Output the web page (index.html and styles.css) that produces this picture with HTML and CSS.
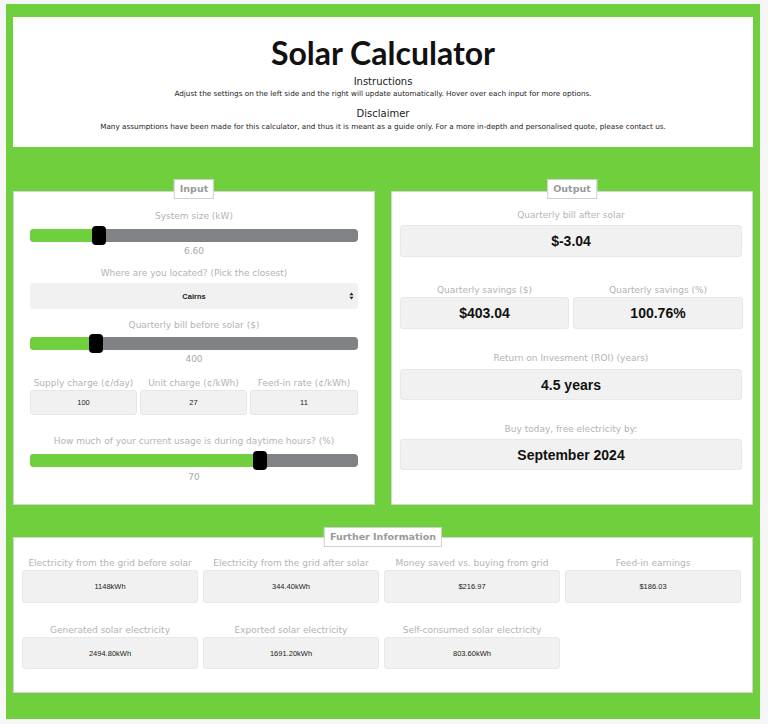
FILE: index.html
```html
<!DOCTYPE html>
<html>
<head>
<meta charset="utf-8">
<title>Solar Calculator</title>
<link rel="stylesheet" href="styles.css">
</head>
<body>
<div class="frame">
  <header class="intro">
    <h1 class="title">Solar Calculator</h1>
    <h2 class="sub first">Instructions</h2>
    <p class="note n1">Adjust the settings on the left side and the right will update automatically. Hover over each input for more options.</p>
    <h2 class="sub second">Disclaimer</h2>
    <p class="note n2">Many assumptions have been made for this calculator, and thus it is meant as a guide only. For a more in-depth and personalised quote, please contact us.</p>
  </header>

  <div class="panels">
    <section class="panel input-panel">
      <span class="legend">Input</span>
      <div class="lbl l1">System size (kW)</div>
      <div class="track t1"><div class="fill" style="width:21%"></div><div class="thumb" style="left:calc(21% - 7px)"></div></div>
      <div class="val v1">6.60</div>

      <div class="lbl l2">Where are you located? (Pick the closest)</div>
      <div class="select">
        <span>Cairns</span>
        <svg class="arrows" width="5" height="8" viewBox="0 0 5 8"><path d="M2.5 0.5 L4.6 3.2 H0.4 Z M2.5 7.5 L4.6 4.8 H0.4 Z" fill="#222"/></svg>
      </div>

      <div class="lbl l3">Quarterly bill before solar ($)</div>
      <div class="track t2"><div class="fill" style="width:20%"></div><div class="thumb" style="left:calc(20% - 7px)"></div></div>
      <div class="val v2">400</div>

      <div class="rates">
        <div class="rate"><div class="lbl">Supply charge (¢/day)</div><div class="field">100</div></div>
        <div class="rate"><div class="lbl">Unit charge (¢/kWh)</div><div class="field">27</div></div>
        <div class="rate"><div class="lbl">Feed-in rate (¢/kWh)</div><div class="field">11</div></div>
      </div>

      <div class="lbl l4">How much of your current usage is during daytime hours? (%)</div>
      <div class="track t3"><div class="fill" style="width:70%"></div><div class="thumb" style="left:calc(70% - 7px)"></div></div>
      <div class="val v3">70</div>
    </section>

    <section class="panel output-panel">
      <span class="legend">Output</span>
      <div class="lbl o1">Quarterly bill after solar</div>
      <div class="out b1">$-3.04</div>
      <div class="pair">
        <div class="half"><div class="lbl">Quarterly savings ($)</div><div class="out">$403.04</div></div>
        <div class="half"><div class="lbl">Quarterly savings (%)</div><div class="out">100.76%</div></div>
      </div>
      <div class="lbl o3">Return on Invesment (ROI) (years)</div>
      <div class="out b3">4.5 years</div>
      <div class="lbl o4">Buy today, free electricity by:</div>
      <div class="out b4">September 2024</div>
    </section>
  </div>

  <section class="panel further">
    <span class="legend wide">Further Information</span>
    <div class="grid">
      <div class="cell"><div class="lbl">Electricity from the grid before solar</div><div class="info">1148kWh</div></div>
      <div class="cell"><div class="lbl">Electricity from the grid after solar</div><div class="info">344.40kWh</div></div>
      <div class="cell"><div class="lbl">Money saved vs. buying from grid</div><div class="info">$216.97</div></div>
      <div class="cell"><div class="lbl">Feed-in earnings</div><div class="info">$186.03</div></div>
      <div class="cell row2"><div class="lbl">Generated solar electricity</div><div class="info">2494.80kWh</div></div>
      <div class="cell row2"><div class="lbl">Exported solar electricity</div><div class="info">1691.20kWh</div></div>
      <div class="cell row2"><div class="lbl">Self-consumed solar electricity</div><div class="info">803.60kWh</div></div>
    </div>
  </section>
</div>
</body>
</html>
```

FILE: styles.css
```css
* { box-sizing: border-box; }
html, body { margin: 0; padding: 0; }
body {
  background: #f6f6f6;
  font-family: "DejaVu Sans", Verdana, sans-serif;
  width: 768px;
  height: 724px;
  overflow: hidden;
}
.frame {
  margin: 4px 0 0 6px;
  width: 754px;
  height: 715px;
  background: #6fcf3c;
  padding: 13px 7px 0;
}
.intro {
  background: #fff;
  height: 130px;
  text-align: center;
  padding-top: 19px;
  color: #222;
}
.title {
  margin: 0;
  font-family: "Lato", "Liberation Sans", sans-serif;
  font-weight: 700;
  font-size: 32px;
  line-height: 34px;
  color: #111;
}
.sub {
  margin: 0;
  font-weight: normal;
  font-size: 10px;
  line-height: 12px;
  color: #222;
}
.sub.first { margin-top: 6px; }
.sub.second { margin-top: 9px; }
.note {
  margin: 1px 0 0;
  font-size: 7.25px;
  line-height: 10px;
  color: #222;
}
.note.n2 { margin-top: 2px; }
.panels {
  margin-top: 44px;
  display: grid;
  grid-template-columns: 362px 362px;
  column-gap: 16px;
}
.panel {
  position: relative;
  background: #fff;
  border: 1px solid #d4d4d4;
}
.legend {
  position: absolute;
  top: -13px;
  left: 50%;
  transform: translateX(-50%);
  height: 20px;
  padding: 0 5px;
  background: #fff;
  border: 1px solid #cfcfcf;
  font-weight: bold;
  font-size: 9.5px;
  line-height: 18px;
  color: #9a9a9a;
  white-space: nowrap;
}
.legend.wide { top: -11px; }
.lbl {
  text-align: center;
  font-size: 9px;
  line-height: 14px;
  color: #b3b3b3;
  white-space: nowrap;
}
.input-panel {
  height: 314px;
  padding: 17px 16px 0;
}
.track {
  position: relative;
  height: 13px;
  border-radius: 4px;
  background: #808285;
}
.fill {
  height: 100%;
  background: #6fcf3c;
  border-radius: 4px 0 0 4px;
}
.thumb {
  position: absolute;
  top: -3px;
  width: 14px;
  height: 19px;
  border-radius: 4px;
  background: #000;
}
.t1 { margin-top: 6px; }
.val {
  text-align: center;
  font-size: 9px;
  line-height: 14px;
  color: #a8a8a8;
}
.v1 { margin-top: 2px; }
.l2 { margin-top: 8px; }
.select {
  position: relative;
  margin-top: 3px;
  height: 26px;
  background: #f1f1f1;
  border-radius: 3px;
  display: flex;
  align-items: center;
  justify-content: center;
  font-family: "Liberation Sans", Arial, sans-serif;
  font-weight: bold;
  font-size: 7.5px;
  color: #222;
}
.arrows {
  position: absolute;
  right: 4px;
  top: 9px;
}
.l3 { margin-top: 9px; }
.t2 { margin-top: 5px; }
.v2 { margin-top: 2px; }
.rates {
  margin-top: 10px;
  display: grid;
  grid-template-columns: 107px 107px 108px;
  column-gap: 3px;
}
.field {
  height: 25px;
  background: #f1f1f1;
  border: 1px solid #e6e6e6;
  border-radius: 3px;
  display: flex;
  align-items: center;
  justify-content: center;
  font-family: "Liberation Sans", Arial, sans-serif;
  font-size: 7.5px;
  color: #222;
}
.l4 { margin-top: 19px; }
.t3 { margin-top: 6px; }
.v3 { margin-top: 3px; }

.output-panel {
  height: 314px;
  padding: 16px 10px 0 8px;
}
.out {
  height: 32px;
  background: #f1f1f1;
  border: 1px solid #e8e8e8;
  border-radius: 3px;
  display: flex;
  align-items: center;
  justify-content: center;
  font-family: "Liberation Sans", Arial, sans-serif;
  font-weight: bold;
  font-size: 14px;
  color: #111;
}
.b1 { margin-top: 3px; }
.pair {
  margin-top: 26px;
  display: grid;
  grid-template-columns: 169px 170px;
  column-gap: 4px;
}
.o3 { margin-top: 22px; }
.b3 { margin-top: 4px; height: 31px; }
.o4 { margin-top: 22px; }
.b4 { margin-top: 3px; height: 31px; }

.further {
  margin-top: 32px;
  height: 156px;
  padding: 18px 11px 0 8px;
}
.grid {
  display: grid;
  grid-template-columns: repeat(4, 176px);
  column-gap: 5px;
}
.info {
  height: 33px;
  background: #f1f1f1;
  border: 1px solid #e8e8e8;
  border-radius: 3px;
  display: flex;
  align-items: center;
  justify-content: center;
  font-family: "Liberation Sans", Arial, sans-serif;
  font-size: 7.5px;
  color: #222;
}
.row2 { margin-top: 20px; }
.row2 .info { height: 32px; }
```
